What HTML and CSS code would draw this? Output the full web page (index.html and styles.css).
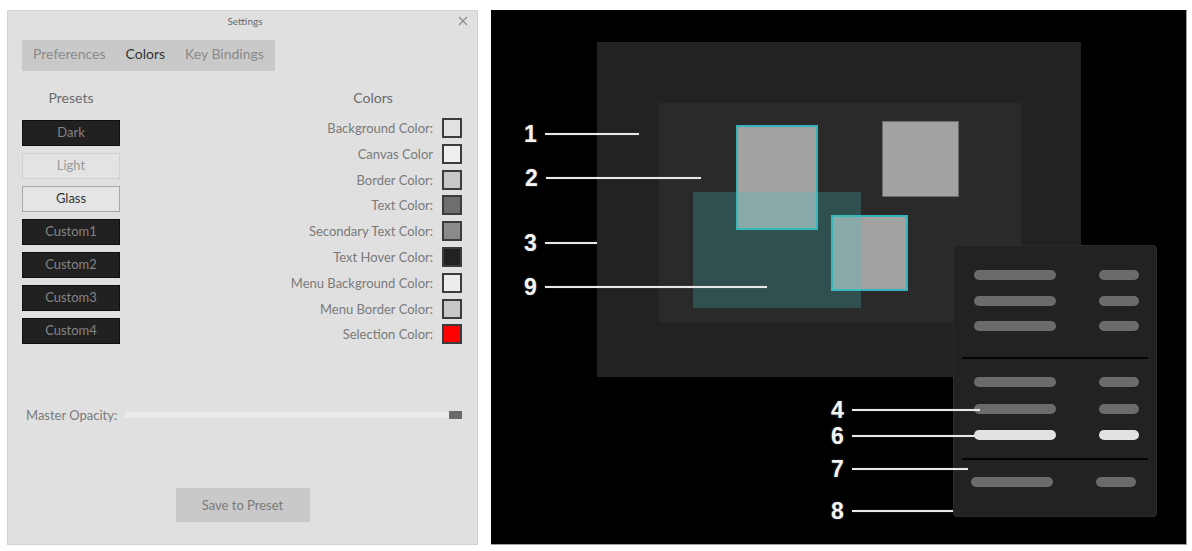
FILE: index.html
```html
<!DOCTYPE html>
<html>
<head>
<meta charset="utf-8">
<title>Settings</title>
<link rel="stylesheet" href="styles.css">
</head>
<body>
<div class="page">
  <section class="settings">
    <header class="titlebar">
      <span></span>
      <span class="title">Settings</span>
      <span class="close"><svg width="10" height="10" viewBox="0 0 10 10"><path d="M1 1L9 9M9 1L1 9" stroke="#8a8a8a" stroke-width="1.1" fill="none"/></svg></span>
    </header>
    <nav class="tabs">
      <span class="tab">Preferences</span>
      <span class="tab active">Colors</span>
      <span class="tab">Key Bindings</span>
    </nav>
    <div class="columns">
      <div class="presets">
        <h2 class="heading">Presets</h2>
        <div class="preset-list">
          <div class="preset dark">Dark</div>
          <div class="preset light">Light</div>
          <div class="preset glass">Glass</div>
          <div class="preset dark">Custom1</div>
          <div class="preset dark">Custom2</div>
          <div class="preset dark">Custom3</div>
          <div class="preset dark">Custom4</div>
        </div>
      </div>
      <div class="colors">
        <h2 class="heading">Colors</h2>
        <ul class="color-list">
          <li class="color-row"><span class="label">Background Color:</span><span class="swatch sw-bg"></span></li>
          <li class="color-row"><span class="label">Canvas Color</span><span class="swatch sw-canvas"></span></li>
          <li class="color-row"><span class="label">Border Color:</span><span class="swatch sw-border"></span></li>
          <li class="color-row"><span class="label">Text Color:</span><span class="swatch sw-text"></span></li>
          <li class="color-row"><span class="label">Secondary Text Color:</span><span class="swatch sw-second"></span></li>
          <li class="color-row"><span class="label">Text Hover Color:</span><span class="swatch sw-hover"></span></li>
          <li class="color-row"><span class="label">Menu Background Color:</span><span class="swatch sw-menubg"></span></li>
          <li class="color-row"><span class="label">Menu Border Color:</span><span class="swatch sw-menuborder"></span></li>
          <li class="color-row"><span class="label">Selection Color:</span><span class="swatch sw-sel"></span></li>
        </ul>
      </div>
    </div>
    <div class="opacity">
      <span class="label">Master Opacity:</span>
      <div class="track"><div class="thumb"></div></div>
    </div>
    <div class="actions">
      <div class="save">Save to Preset</div>
    </div>
  </section>

  <section class="diagram">
    <div class="shape r-outer"></div>
    <div class="shape r-inner"></div>
    <div class="shape sq sq-a"></div>
    <div class="shape sq sq-b"></div>
    <div class="shape sq sq-c"></div>
    <div class="shape r-sel"></div>
    <div class="shape menu">
      <div class="mrow"><i class="bar long"></i><i class="bar short"></i></div>
      <div class="mrow"><i class="bar long"></i><i class="bar short"></i></div>
      <div class="mrow"><i class="bar long"></i><i class="bar short"></i></div>
      <div class="msep s1"></div>
      <div class="mrow g2"><i class="bar long"></i><i class="bar short"></i></div>
      <div class="mrow g2"><i class="bar long"></i><i class="bar short"></i></div>
      <div class="mrow g2 hi"><i class="bar long"></i><i class="bar short"></i></div>
      <div class="msep s2"></div>
      <div class="mrow last"><i class="bar long"></i><i class="bar short"></i></div>
    </div>

    <div class="callout c1"><span class="num">1</span><span class="line" style="width:94px"></span></div>
    <div class="callout c2"><span class="num">2</span><span class="line" style="width:155px"></span></div>
    <div class="callout c3"><span class="num">3</span><span class="line" style="width:52px"></span></div>
    <div class="callout c9"><span class="num">9</span><span class="line" style="width:222px"></span></div>
    <div class="callout c4"><span class="num">4</span><span class="line" style="width:128px"></span></div>
    <div class="callout c6"><span class="num">6</span><span class="line" style="width:123px"></span></div>
    <div class="callout c7"><span class="num">7</span><span class="line" style="width:116px"></span></div>
    <div class="callout c8"><span class="num">8</span><span class="line" style="width:101px"></span></div>
  </section>
</div>
</body>
</html>
```

FILE: styles.css
```css
html, body {
  margin: 0;
  padding: 0;
  background: #ffffff;
}

.page {
  display: flex;
  align-items: flex-start;
  gap: 13px;
  padding: 10px 0 0 7px;
  font-family: Lato, "Open Sans", sans-serif;
}

/* ---------- Settings panel ---------- */
.settings {
  box-sizing: border-box;
  width: 471px;
  height: 535px;
  background: #e0e0e0;
  border: 1px solid #d2d2d2;
  display: flex;
  flex-direction: column;
  padding: 0 15px 0 14px;
}

.titlebar {
  display: grid;
  grid-template-columns: 1fr auto 1fr;
  align-items: center;
  height: 19px;
  margin-right: -10px;
}
.title {
  font-size: 10px;
  color: #6a6a6a;
  margin-left: -4px;
}
.close {
  justify-self: end;
  display: flex;
  margin-right: 4px;
}

.tabs {
  display: flex;
  align-self: flex-start;
  margin-top: 10px;
  height: 31px;
  background: #c9c9c9;
}
.tab {
  padding: 0 10px;
  line-height: 28px;
  font-size: 14px;
  color: #8a8a8a;
}
.tab:first-child { padding-left: 11px; }
.tab:last-child { padding-right: 11px; }
.tab.active {
  color: #333333;
}

.columns {
  display: flex;
  justify-content: space-between;
  margin-top: 17px;
}

.heading {
  margin: 0;
  height: 20px;
  line-height: 19px;
  font-size: 14px;
  font-weight: normal;
  color: #6c6c6c;
  text-align: center;
}

.presets {
  width: 98px;
}
.preset-list {
  display: flex;
  flex-direction: column;
  gap: 7px;
  margin-top: 12px;
}
.preset {
  box-sizing: border-box;
  height: 26px;
  line-height: 22px;
  text-align: center;
  font-size: 13px;
  border: 1px solid #111;
}
.preset.dark {
  background: #212121;
  border-color: #0f0f0f;
  color: #858585;
}
.preset.light {
  background: #e3e3e3;
  border-color: #d0d0d0;
  color: #9a9a9a;
}
.preset.glass {
  background: #e5e5e5;
  border-color: #a8a8a8;
  color: #333333;
}

.colors {
  width: 178px;
}
.color-list {
  list-style: none;
  margin: 10px 0 0;
  padding: 0;
  display: flex;
  flex-direction: column;
  gap: 5.8px;
  align-items: flex-end;
}
.color-row {
  display: flex;
  align-items: center;
  justify-content: flex-end;
  gap: 9px;
  height: 20px;
  line-height: 18px;
  white-space: nowrap;
}
.label {
  font-size: 13px;
  color: #7a7a7a;
}
.swatch {
  box-sizing: border-box;
  width: 20px;
  height: 20px;
  border: 2px solid #3c3c3c;
}
.sw-bg { background: #e2e2e2; }
.sw-canvas { background: #efefef; }
.sw-border { background: #c8c8c8; }
.sw-text { background: #6e6e6e; }
.sw-second { background: #8a8a8a; }
.sw-hover { background: #222222; }
.sw-menubg { background: #ececec; }
.sw-menuborder { background: #c8c8c8; }
.sw-sel { background: #ff0000; }

.opacity {
  display: flex;
  align-items: center;
  gap: 8px;
  height: 20px;
  margin-top: 61px;
  margin-left: 4px;
}
.track {
  flex: 1;
  height: 6px;
  background: #ebebeb;
  display: flex;
  justify-content: flex-end;
  align-items: center;
}
.thumb {
  width: 13px;
  height: 8px;
  background: #6b6b6b;
  flex: none;
}

.actions {
  display: flex;
  justify-content: center;
  margin-top: 63px;
  margin-left: 1px;
}
.save {
  width: 134px;
  height: 34px;
  line-height: 34px;
  text-align: center;
  background: #c9c9c9;
  color: #7a7a7a;
  font-size: 13px;
}

/* ---------- Diagram ---------- */
.diagram {
  position: relative;
  box-sizing: border-box;
  width: 696px;
  height: 535px;
  background: #000;
  border-right: 1px solid #a0a0a0;
  border-bottom: 1px solid #a0a0a0;
  overflow: hidden;
  font-family: "Liberation Sans", Arial, sans-serif;
}
.shape {
  position: absolute;
  box-sizing: border-box;
}
.r-outer {
  left: 106px; top: 32px; width: 484px; height: 335px;
  background: #222222;
}
.r-inner {
  left: 168px; top: 93px; width: 362px; height: 219px;
  background: #2a2a2a;
}
.sq {
  background: #a2a2a2;
}
.sq-a {
  left: 245px; top: 115px; width: 82px; height: 105px;
  border: 2px solid #35b3ba;
}
.sq-b {
  left: 391px; top: 111px; width: 77px; height: 76px;
  border: 1px solid #6a6a6a;
}
.sq-c {
  left: 340px; top: 205px; width: 77px; height: 76px;
  border: 2px solid #35b3ba;
}
.r-sel {
  left: 202px; top: 182px; width: 168px; height: 116px;
  background: rgba(66, 196, 196, 0.25);
}

.menu {
  left: 462px; top: 235px; width: 204px; height: 272px;
  background: #222222;
  border: 1px solid #2b2b2b;
  border-radius: 4px;
  display: flex;
  flex-direction: column;
  padding-top: 24px;
}
.mrow {
  display: flex;
  justify-content: space-between;
  height: 10px;
  padding: 0 17px 0 20px;
  margin-bottom: 15.5px;
}
.mrow.g2 {
  margin-bottom: 16.5px;
}
.mrow.last {
  padding: 0 20px 0 17px;
}
.bar {
  display: block;
  height: 10px;
  border-radius: 5px;
  background: #6b6b6b;
}
.bar.long { width: 82px; }
.bar.short { width: 40px; }
.mrow.hi .bar {
  background: #e2e2e2;
}
.msep {
  height: 2px;
  margin: 0 8px;
  background: #050505;
}
.msep.s1 { margin-top: 10.5px; margin-bottom: 18px; }
.msep.s2 { margin-top: 1.5px; margin-bottom: 17px; }

.callout {
  position: absolute;
  display: flex;
  align-items: center;
  height: 20px;
}
.num {
  width: 21px;
  font-size: 23px;
  font-weight: bold;
  line-height: 20px;
  color: #f4f4f4;
  text-shadow: 0 0 2px rgba(255,255,255,0.35);
}
.line {
  display: block;
  height: 2px;
  background: #e8e8e8;
  box-shadow: 0 0 1px rgba(255,255,255,0.5);
}
.c1 { left: 33px; top: 114px; }
.c2 { left: 34px; top: 158px; }
.c3 { left: 33px; top: 223px; }
.c9 { left: 33px; top: 267px; }
.c4 { left: 340px; top: 390px; }
.c6 { left: 340px; top: 416px; }
.c7 { left: 340px; top: 449px; }
.c8 { left: 340px; top: 491px; }
```
